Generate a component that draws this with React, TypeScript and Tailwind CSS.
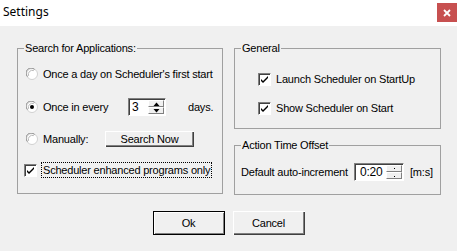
import React from "react";

function Radio({ checked }: { checked?: boolean }) {
  return (
    <svg width="12" height="12" viewBox="0 0 12 12" className="shrink-0">
      <circle cx="6" cy="6" r="5.5" fill="#ffffff" stroke="#d0d0d0" strokeWidth="1" />
      <path d="M1.5 8.6 A5 5 0 0 1 8.6 1.5" stroke="#909090" strokeWidth="1" fill="none" />
      <path d="M2.6 7.8 A4 4 0 0 1 7.8 2.6" stroke="#b8b8b8" strokeWidth="1" fill="none" />
      {checked && <circle cx="6" cy="6" r="2" fill="#000" />}
    </svg>
  );
}

function Check() {
  return (
    <div className="w-[13px] h-[13px] shrink-0 bg-white border-t border-l border-t-[#808080] border-l-[#808080] border-b border-r border-b-white border-r-white flex items-center justify-center shadow-[inset_1px_1px_0_#404040]">
      <svg width="9" height="9" viewBox="0 0 9 9">
        <path d="M1 4 L3 6 L8 1 L8 3 L3 8 L1 6 Z" fill="#000" />
      </svg>
    </div>
  );
}

function SpinButtons({ small }: { small?: boolean }) {
  return (
    <div className="flex flex-col w-[16px] h-full">
      <div className="flex-1 bg-[#f0f0f0] border-t border-l border-white border-b border-r border-b-[#808080] border-r-[#808080] flex items-center justify-center">
        <svg width="7" height="4" viewBox="0 0 7 4">
          {small ? <path d="M3 1 L4 1 L4 2 L3 2 Z" fill="#000" /> : <path d="M0.5 4 L3.5 0.5 L6.5 4 Z" fill="#000" />}
        </svg>
      </div>
      <div className="flex-1 bg-[#f0f0f0] border-t border-l border-white border-b border-r border-b-[#808080] border-r-[#808080] flex items-center justify-center">
        <svg width="7" height="4" viewBox="0 0 7 4">
          {small ? <path d="M3 2 L4 2 L4 3 L3 3 Z" fill="#000" /> : <path d="M0.5 0 L3.5 3.5 L6.5 0 Z" fill="#000" />}
        </svg>
      </div>
    </div>
  );
}

function Group({
  title,
  className,
  children,
}: {
  title: string;
  className?: string;
  children: React.ReactNode;
}) {
  return (
    <div className={"relative border border-[#a0a0a0] " + (className ?? "")}>
      <span className="absolute left-[6px] top-[-8px] bg-[#f0f0f0] px-[1px] leading-[14px] text-black">
        {title}
      </span>
      {children}
    </div>
  );
}

function Button({ label, def, className }: { label: string; def?: boolean; className?: string }) {
  return (
    <div
      className={
        "h-[24px] w-[72px] flex items-center justify-center bg-[#f0f0f0] text-black " +
        (def
          ? "border border-black shadow-[inset_1px_1px_0_#ffffff,inset_-1px_-1px_0_#808080] "
          : "shadow-[inset_1px_1px_0_#ffffff,inset_-1px_-1px_0_#404040,inset_-2px_-2px_0_#808080] ") +
        (className ?? "")
      }
    >
      {label}
    </div>
  );
}

export default function App() {
  return (
    <div
      className="relative w-[457px] h-[251px] bg-[#f0f0f0] text-[11px] tracking-[-0.2px] text-black overflow-hidden"
      style={{ fontFamily: '"Liberation Sans", Arial, sans-serif' }}
    >
      {/* Title bar */}
      <div className="h-[26px] bg-white flex items-start justify-between tracking-normal">
        <div
          className="pl-[3px] pt-[4px] text-[12px] leading-[16px] text-black"
          style={{ fontFamily: '"Noto Sans", "Open Sans", sans-serif' }}
        >
          Settings
        </div>
        <div className="mt-[3px] w-[20px] h-[19px] bg-[#c75050] flex items-center justify-center">
          <svg width="8" height="8" viewBox="0 0 8 8">
            <path d="M1 1 L7 7 M7 1 L1 7" stroke="#fff" strokeWidth="1.8" />
          </svg>
        </div>
      </div>

      {/* Body */}
      <div className="flex pl-[17px] pt-[22px] gap-[11px]">
        <Group title="Search for Applications:" className="w-[206px] h-[146px]">
          <div className="flex flex-col pt-[17px]">
            <div className="h-[16px] flex items-center pl-[8px]">
              <Radio />
              <span className="ml-[5px] whitespace-nowrap">Once a day on Scheduler's first start</span>
            </div>
            <div className="h-[18px] mt-[16px] flex items-center pl-[8px]">
              <Radio checked />
              <span className="ml-[5px] w-[85px] shrink-0 whitespace-nowrap">Once in every</span>
              <div className="h-[18px] w-[38px] shrink-0 bg-white flex items-center border-t border-l border-[#808080] border-b border-r border-b-white border-r-white shadow-[inset_1px_1px_0_#404040]">
                <span className="flex-1 pl-[3px] text-[12px]">3</span>
                <div className="h-full py-[1px] pr-[1px]">
                  <SpinButtons />
                </div>
              </div>
              <span className="ml-[22px]">days.</span>
            </div>
            <div className="h-[16px] mt-[15px] flex items-center pl-[8px]">
              <Radio />
              <span className="ml-[5px] w-[62px] shrink-0">Manually:</span>
              <div className="h-[16px] w-[89px] shrink-0 flex items-center justify-center bg-[#f0f0f0] shadow-[inset_1px_1px_0_#ffffff,inset_-1px_-1px_0_#404040,inset_-2px_-2px_0_#808080]">
                Search Now
              </div>
            </div>
            <div className="h-[16px] mt-[15px] flex items-center pl-[6px]">
              <Check />
              <span className="ml-[4px] px-[1px] h-[16px] leading-[14px] border border-dotted border-black whitespace-nowrap">
                Scheduler enhanced programs only
              </span>
            </div>
          </div>
        </Group>

        <div className="flex flex-col gap-[16px]">
          <Group title="General" className="w-[207px] h-[81px]">
            <div className="flex flex-col pt-[24px] pl-[23px]">
              <div className="h-[13px] flex items-center">
                <Check />
                <span className="ml-[5px]">Launch Scheduler on StartUp</span>
              </div>
              <div className="h-[13px] mt-[16px] flex items-center">
                <Check />
                <span className="ml-[5px]">Show Scheduler on Start</span>
              </div>
            </div>
          </Group>
          <Group title="Action Time Offset" className="w-[207px] h-[50px]">
            <div className="flex items-center pt-[17px] pl-[6px] h-[35px]">
              <span className="w-[113px] shrink-0 whitespace-nowrap">Default auto-increment</span>
              <div className="h-[18px] w-[50px] shrink-0 bg-white flex items-center border-t border-l border-[#808080] border-b border-r border-b-white border-r-white shadow-[inset_1px_1px_0_#404040]">
                <span className="flex-1 pl-[5px] text-[12px]">0:20</span>
                <div className="h-full py-[1px] pr-[1px]">
                  <SpinButtons small />
                </div>
              </div>
              <span className="ml-[6px] whitespace-nowrap">[m:s]</span>
            </div>
          </Group>
        </div>
      </div>

      <div className="flex justify-center gap-[8px] mt-[16px]">
        <Button label="Ok" def />
        <Button label="Cancel" />
      </div>
    </div>
  );
}
